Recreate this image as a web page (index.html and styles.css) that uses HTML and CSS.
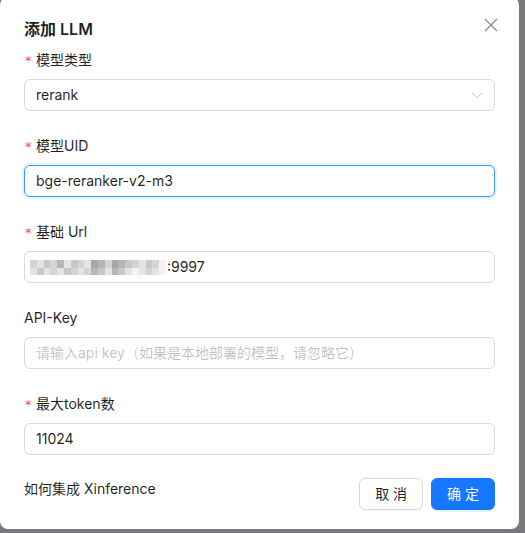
FILE: index.html
```html
<!DOCTYPE html>
<html lang="zh">
<head>
<meta charset="utf-8">
<title>添加 LLM</title>
<link rel="stylesheet" href="styles.css">
</head>
<body>
<div class="modal">
  <button class="close" aria-label="close">
    <svg width="14" height="14" viewBox="0 0 14 14"><path d="M1 1 L13 13 M13 1 L1 13" stroke="currentColor" stroke-width="1.3" fill="none"/></svg>
  </button>
  <div class="title">添加 LLM</div>
  <div class="form">
    <div class="item">
      <div class="label required">模型类型</div>
      <div class="control select">
        <span class="value">rerank</span>
        <svg class="arrow" width="12" height="12" viewBox="0 0 12 12"><path d="M1 3.8 L6 8.6 L11 3.8" stroke="currentColor" stroke-width="1" fill="none"/></svg>
      </div>
    </div>
    <div class="item">
      <div class="label required">模型UID</div>
      <div class="control focused">bge-reranker-v2-m3</div>
    </div>
    <div class="item">
      <div class="label required">基础 Url</div>
      <div class="control">
        <span class="mosaic">
          <i class="c2"></i><i class="c1"></i><i class="c3"></i><i class="c2"></i><i class="c4"></i><i class="c1"></i><i class="c3"></i><i class="c2"></i><i class="c1"></i><i class="c5"></i><i class="c4"></i><i class="c2"></i><i class="c5"></i><i class="c4"></i><i class="c3"></i><i class="c2"></i><i class="c1"></i><i class="c3"></i><i class="c2"></i><i class="c0"></i>
          <i class="c1"></i><i class="c3"></i><i class="c1"></i><i class="c2"></i><i class="c1"></i><i class="c3"></i><i class="c2"></i><i class="c1"></i><i class="c2"></i><i class="c4"></i><i class="c3"></i><i class="c1"></i><i class="c4"></i><i class="c3"></i><i class="c1"></i><i class="c0"></i><i class="c1"></i><i class="c2"></i><i class="c1"></i><i class="c0"></i>
        </span><span class="port">:9997</span>
      </div>
    </div>
    <div class="item">
      <div class="label">API-Key</div>
      <div class="control placeholder">请输入api key（如果是本地部署的模型，请忽略它）</div>
    </div>
    <div class="item">
      <div class="label required">最大token数</div>
      <div class="control">11024</div>
    </div>
  </div>
  <div class="footer">
    <span class="link">如何集成 Xinference</span>
    <div class="buttons">
      <button class="btn">取 消</button>
      <button class="btn primary">确 定</button>
    </div>
  </div>
</div>
</body>
</html>
```

FILE: styles.css
```css
* { box-sizing: border-box; }
html, body {
  margin: 0;
  height: 100%;
  overflow: hidden;
}
body {
  background: #77797c;
  font-family: Inter, "Noto Sans CJK SC", sans-serif;
  font-size: 14px;
  line-height: 22px;
  color: rgba(0, 0, 0, 0.88);
}
.modal {
  position: relative;
  width: 519px;
  margin-top: -3px;
  background: #fff;
  border-radius: 8px;
  padding: 20px 24px 19px;
}
.close {
  position: absolute;
  top: 17px;
  right: 17px;
  width: 22px;
  height: 22px;
  padding: 0;
  border: 0;
  background: transparent;
  color: rgba(0, 0, 0, 0.45);
  display: flex;
  align-items: center;
  justify-content: center;
}
.title {
  font-size: 16px;
  line-height: 24px;
  height: 24px;
  font-weight: 600;
  margin-bottom: 8px;
}
.item { margin-bottom: 24px; }
.label {
  height: 30px;
  padding-bottom: 8px;
  line-height: 22px;
  display: flex;
  align-items: center;
}
.required::before {
  content: "*";
  color: #ff4d4f;
  font-family: "DejaVu Sans", sans-serif;
  font-size: 13px;
  line-height: 1;
  width: 7px;
  margin-right: 4px;
  margin-left: 1px;
}
.control {
  height: 32px;
  border: 1px solid #d9d9d9;
  border-radius: 6px;
  padding: 4px 11px;
  display: flex;
  align-items: center;
  white-space: nowrap;
}
.select { justify-content: space-between; }
.arrow { color: rgba(0, 0, 0, 0.25); }
.focused {
  border-color: #4096ff;
  box-shadow: 0 0 0 2px rgba(5, 145, 255, 0.1);
}
.placeholder { color: rgba(0, 0, 0, 0.25); }
.mosaic {
  display: inline-grid;
  grid-template-columns: repeat(20, 6.8px);
  grid-template-rows: 8px 7px;
  margin-left: -6px;
}
.mosaic i { display: block; }
.port { margin-left: 1px; }
.c0 { background: #f4f4f4; }
.c1 { background: #e4e4e4; }
.c2 { background: #d4d4d4; }
.c3 { background: #c8c8c8; }
.c4 { background: #b6b6b6; }
.c5 { background: #a8a8a8; }
.footer {
  display: flex;
  justify-content: space-between;
  align-items: flex-start;
  margin-top: -1px;
}
.buttons {
  display: flex;
  gap: 8px;
}
.btn {
  height: 32px;
  padding: 4px 15px;
  border: 1px solid #d9d9d9;
  border-radius: 6px;
  background: #fff;
  font-family: Inter, "Noto Sans CJK SC", sans-serif;
  font-size: 14px;
  line-height: 22px;
  color: rgba(0, 0, 0, 0.88);
  box-shadow: 0 2px 0 rgba(0, 0, 0, 0.02);
}
.primary {
  background: #1677ff;
  border-color: #1677ff;
  color: #fff;
  box-shadow: 0 2px 0 rgba(5, 145, 255, 0.1);
}
```
